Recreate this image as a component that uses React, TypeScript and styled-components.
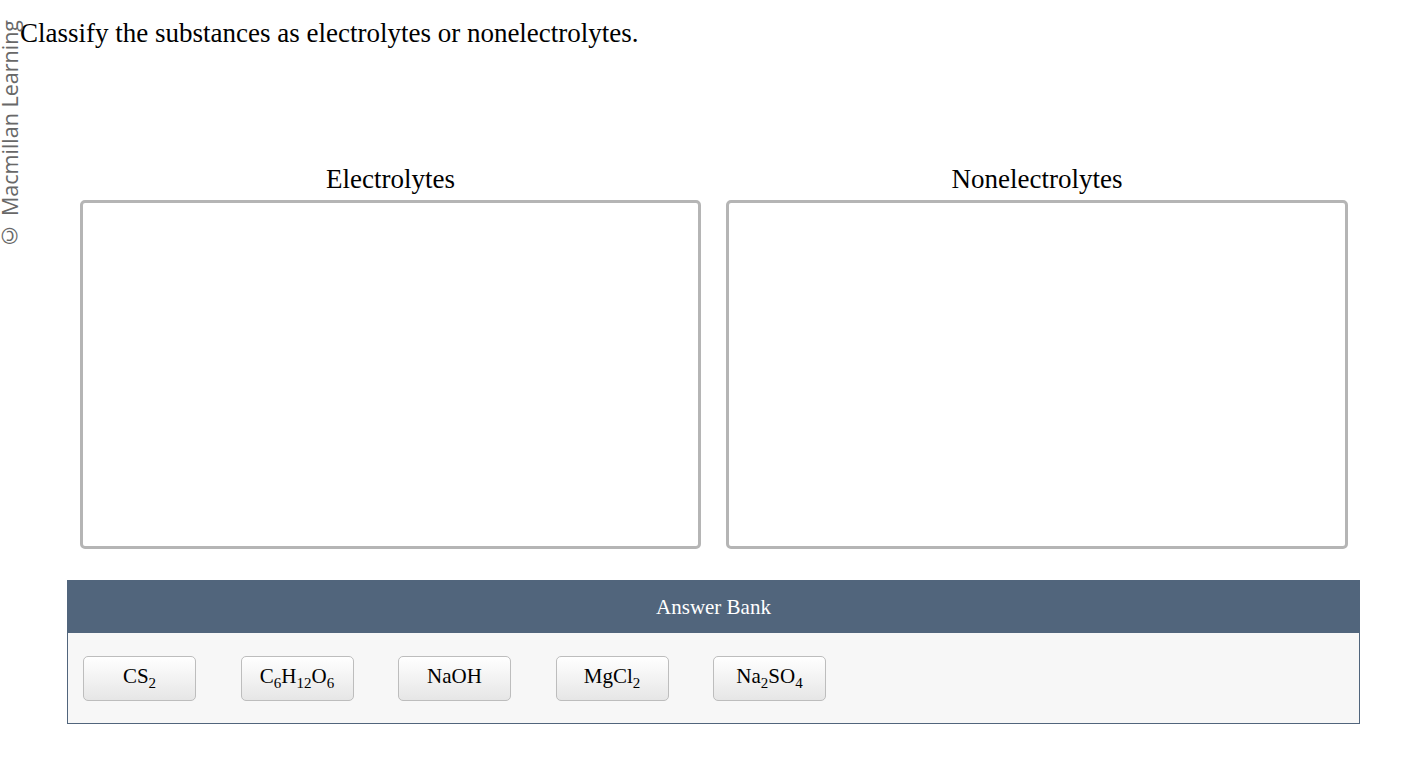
import React from "react";
import styled, { createGlobalStyle } from "styled-components";

const GlobalStyle = createGlobalStyle`
  html, body {
    margin: 0;
    padding: 0;
    background: #ffffff;
  }
  body {
    font-family: "Liberation Serif", "Times New Roman", serif;
    color: #000;
  }
`;

const Page = styled.div`
  position: relative;
  width: 1414px;
  height: 780px;
  padding: 18px 0 0 20px;
  box-sizing: border-box;
`;

// copyright line running up the left edge
const Watermark = styled.div`
  position: absolute;
  left: 1px;
  top: 20px;
  writing-mode: vertical-rl;
  transform: rotate(180deg);
  font-family: "Open Sans", "Noto Sans", sans-serif;
  font-size: 21.5px;
  color: #686868;
  line-height: 18px;
  white-space: nowrap;
`;

const Prompt = styled.div`
  font-size: 27px;
  line-height: 30px;
`;

const Columns = styled.div`
  display: grid;
  grid-template-columns: 621px 622px;
  column-gap: 25px;
  margin: 116px 0 0 60px;
`;

const Column = styled.div`
  display: flex;
  flex-direction: column;
`;

const ColumnTitle = styled.div`
  text-align: center;
  font-size: 27px;
  line-height: 30px;
  height: 30px;
  margin-bottom: 6px;
`;

const DropBox = styled.div`
  height: 349px;
  border: 3px solid #b5b5b5;
  border-radius: 5px;
  box-sizing: border-box;
  background: #fff;
`;

const Bank = styled.div`
  width: 1293px;
  margin: 31px 0 0 47px;
  border: 1px solid #51657c;
  box-sizing: border-box;
`;

const BankHeader = styled.div`
  height: 52px;
  background: #51657c;
  color: #fff;
  font-size: 21px;
  display: flex;
  align-items: center;
  justify-content: center;
`;

const BankBody = styled.div`
  background: #f7f7f7;
  display: flex;
  gap: 44.5px;
  padding: 23px 15px 22px;
`;

const Chip = styled.div`
  width: 113px;
  height: 45px;
  box-sizing: border-box;
  border: 1px solid #bdbdbd;
  border-radius: 5px;
  background: linear-gradient(#ffffff, #e6e6e6);
  display: flex;
  align-items: center;
  justify-content: center;
  font-size: 21px;
  line-height: 24px;
  padding-bottom: 5px;
`;

const Formula = styled.span`
  white-space: nowrap;
  sub {
    font-size: 15px;
    vertical-align: -5px;
    line-height: 0;
  }
`;

const App = () => {
  return (
    <>
      <GlobalStyle />
      <Page>
        <Watermark>© Macmillan Learning</Watermark>
        <Prompt>Classify the substances as electrolytes or nonelectrolytes.</Prompt>
        <Columns>
          <Column>
            <ColumnTitle>Electrolytes</ColumnTitle>
            <DropBox />
          </Column>
          <Column>
            <ColumnTitle>Nonelectrolytes</ColumnTitle>
            <DropBox />
          </Column>
        </Columns>
        <Bank>
          <BankHeader>Answer Bank</BankHeader>
          <BankBody>
            <Chip><Formula>CS<sub>2</sub></Formula></Chip>
            <Chip><Formula>C<sub>6</sub>H<sub>12</sub>O<sub>6</sub></Formula></Chip>
            <Chip><Formula>NaOH</Formula></Chip>
            <Chip><Formula>MgCl<sub>2</sub></Formula></Chip>
            <Chip><Formula>Na<sub>2</sub>SO<sub>4</sub></Formula></Chip>
          </BankBody>
        </Bank>
      </Page>
    </>
  );
};

export default App;
